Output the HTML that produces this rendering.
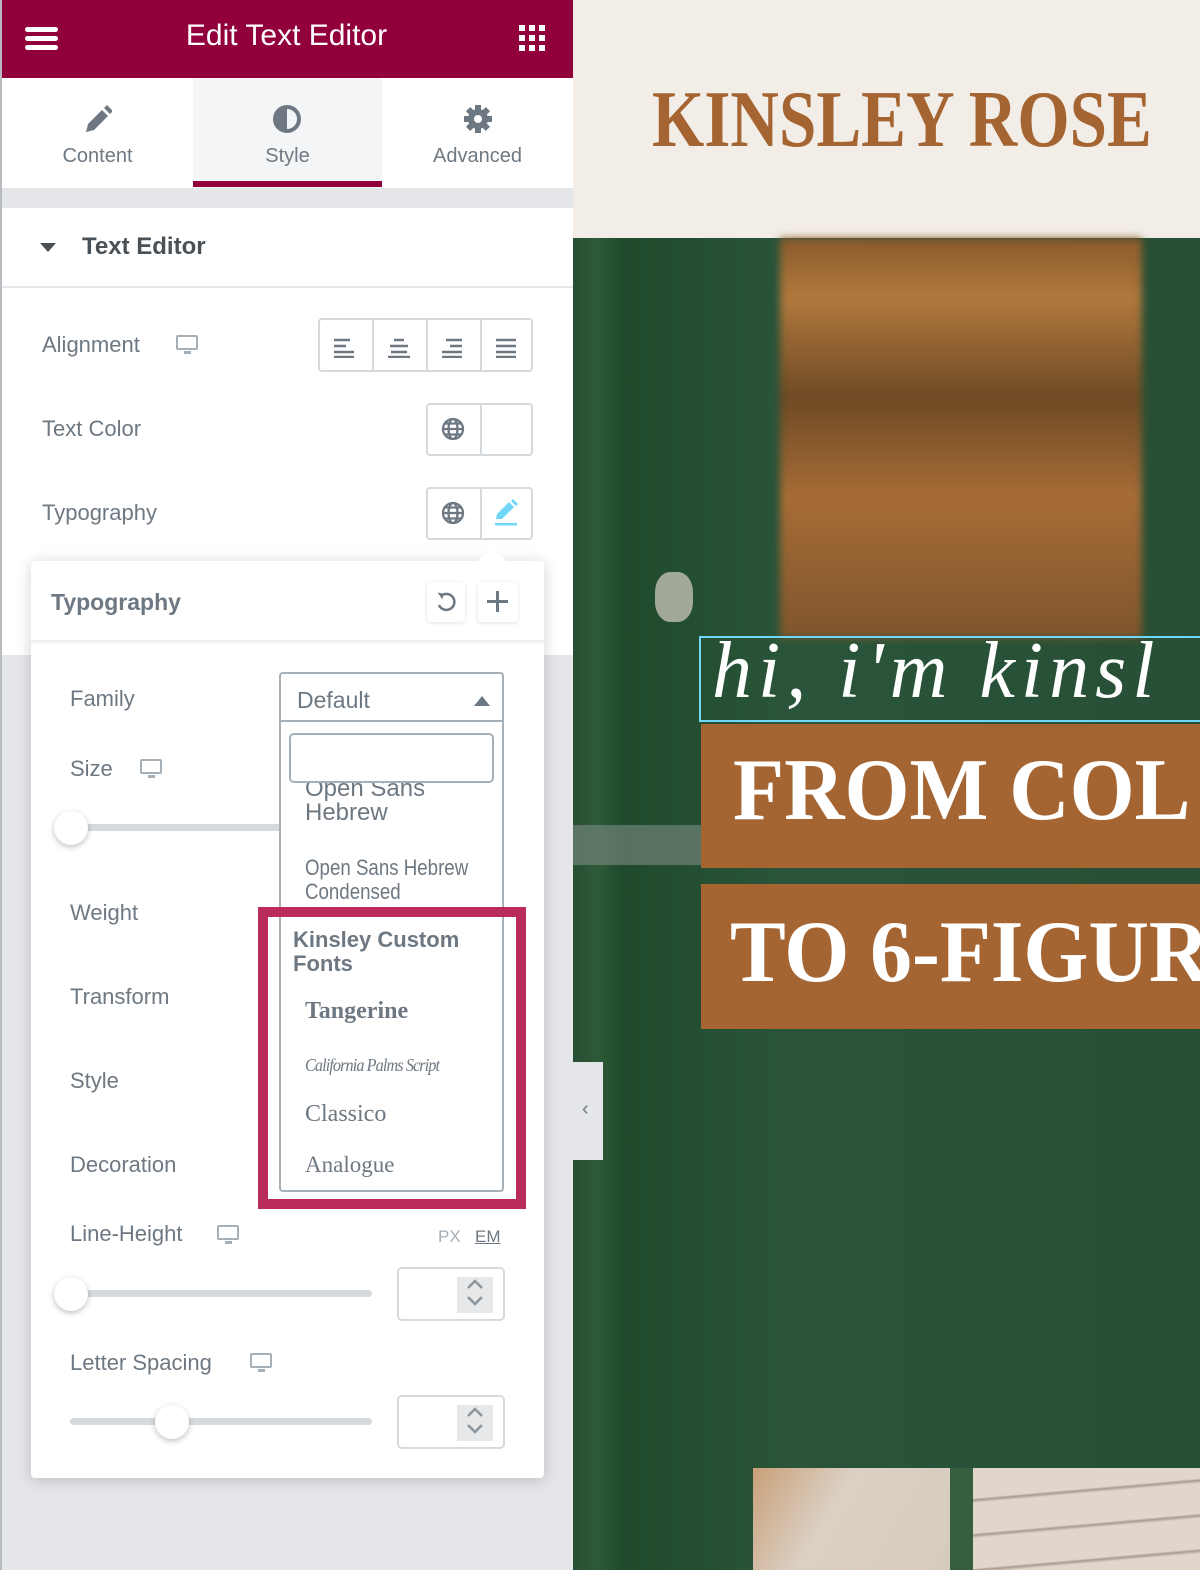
<!DOCTYPE html>
<html><head><meta charset="utf-8"><style>
*{box-sizing:border-box;margin:0;padding:0}
body{width:1200px;height:1570px;position:relative;overflow:hidden;font-family:"Liberation Sans",sans-serif;color:#6d7882;background:#fff}
.a{position:absolute}
.lbl{position:absolute;font-size:22px;color:#6d7882}
.mon{position:absolute;width:22px;height:15px;border:2.5px solid #a4afb7;border-radius:2px}
.mon:after{content:"";position:absolute;left:6px;top:14px;width:7px;height:3px;background:#a4afb7}
.btn{position:absolute;border:2px solid #d5dadf;border-radius:4px;background:#fff}
.glob{position:absolute;width:24px;height:24px}
.thumb{position:absolute;width:34px;height:34px;border-radius:50%;background:#fff;box-shadow:0 2px 6px rgba(0,0,0,.25)}
.track{position:absolute;height:7px;background:#d5dadf;border-radius:4px}
.num{position:absolute;width:108px;height:54px;border:2px solid #d5dadf;border-radius:5px;background:#fff}
.num i{position:absolute;right:10px;top:8px;width:36px;height:36px;background:#e6e8ea}
</style></head><body>
<div class="a" style="left:0;top:0;width:573px;height:1570px;background:#e4e6ea;border-left:2px solid #b8bcc0"></div>
<div class="a" style="left:2px;top:0;width:571px;height:78px;background:#92003b"></div>
<div class="a" style="left:25px;top:27px;width:33px;height:5px;background:#fff;border-radius:3px"></div>
<div class="a" style="left:25px;top:36px;width:33px;height:5px;background:#fff;border-radius:3px"></div>
<div class="a" style="left:25px;top:45px;width:33px;height:5px;background:#fff;border-radius:3px"></div>
<div class="a" style="left:0;top:19px;width:573px;text-align:center;color:#fff;font-size:30px">Edit Text Editor</div>
<svg class="a" style="left:519px;top:25px" width="28" height="28"><g fill="#fff"><rect x="0" y="0" width="6" height="6"/><rect x="10" y="0" width="6" height="6"/><rect x="20" y="0" width="6" height="6"/><rect x="0" y="10" width="6" height="6"/><rect x="10" y="10" width="6" height="6"/><rect x="20" y="10" width="6" height="6"/><rect x="0" y="20" width="6" height="6"/><rect x="10" y="20" width="6" height="6"/><rect x="20" y="20" width="6" height="6"/></g></svg>
<div class="a" style="left:2px;top:78px;width:571px;height:110px;background:#fff"></div>
<div class="a" style="left:193px;top:78px;width:189px;height:110px;background:#f4f5f6"></div>
<div class="a" style="left:193px;top:181px;width:189px;height:6px;background:#92003b"></div>
<svg class="a" style="left:82px;top:104px" width="30" height="30"><path d="M4 28 L6 20 L20 6 L26 12 L12 26 Z M22 4 L25 1 L31 7 L28 10 Z" fill="#6d7882"/></svg>
<div class="a" style="left:2px;top:145px;width:191px;text-align:center;font-size:20px">Content</div>
<svg class="a" style="left:272px;top:104px" width="30" height="30"><circle cx="15" cy="15" r="12" fill="none" stroke="#6d7882" stroke-width="4"/><path d="M15 3 A12 12 0 0 0 15 27Z" fill="#6d7882"/></svg>
<div class="a" style="left:193px;top:145px;width:189px;text-align:center;font-size:20px">Style</div>
<svg class="a" style="left:463px;top:104px" width="30" height="30"><g fill="#6d7882"><circle cx="15" cy="15" r="10"/><rect x="12" y="1" width="6" height="28"/><rect x="1" y="12" width="28" height="6"/><rect x="12" y="1" width="6" height="28" transform="rotate(45 15 15)"/><rect x="12" y="1" width="6" height="28" transform="rotate(-45 15 15)"/></g><circle cx="15" cy="15" r="4" fill="#fff"/></svg>
<div class="a" style="left:382px;top:145px;width:191px;text-align:center;font-size:20px">Advanced</div>
<div class="a" style="left:2px;top:208px;width:571px;height:447px;background:#fff"></div>
<div class="a" style="left:2px;top:286px;width:571px;height:2px;background:#e4e6ea"></div>
<div class="a" style="left:40px;top:243px;border-left:8px solid transparent;border-right:8px solid transparent;border-top:9px solid #495157"></div>
<div class="a" style="left:82px;top:233px;font-size:24px;font-weight:bold;color:#495157">Text Editor</div>
<div class="lbl" style="left:42px;top:332px">Alignment</div>
<div class="mon" style="left:176px;top:335px"></div>
<div class="btn" style="left:318px;top:318px;width:215px;height:54px"></div>
<div class="a" style="left:372px;top:320px;width:2px;height:50px;background:#d5dadf"></div>
<div class="a" style="left:426px;top:320px;width:2px;height:50px;background:#d5dadf"></div>
<div class="a" style="left:480px;top:320px;width:2px;height:50px;background:#d5dadf"></div>
<svg class="a" style="left:333px;top:336px" width="190" height="22"><g stroke="#6d7882" stroke-width="2.5"><path d="M1 4h16M1 10h12M1 16h20M1 21h20"/><path d="M61 4h10M57 10h18M58 16h16M55 21h22"/><path d="M113 4h16M117 10h12M109 16h20M109 21h20"/><path d="M163 4h20M163 10h20M163 16h20M163 21h20"/></g></svg>
<div class="lbl" style="left:42px;top:416px">Text Color</div>
<div class="btn" style="left:426px;top:403px;width:107px;height:53px"></div>
<div class="a" style="left:480px;top:405px;width:2px;height:49px;background:#d5dadf"></div>
<svg class="glob" style="left:441px;top:417px" viewBox="0 0 24 24"><g fill="none" stroke="#6d7882" stroke-width="2.3"><circle cx="12" cy="12" r="10"/><ellipse cx="12" cy="12" rx="4.5" ry="10"/><path d="M2 12h20M4 6.5h16M4 17.5h16"/></g></svg>
<div class="lbl" style="left:42px;top:500px">Typography</div>
<div class="btn" style="left:426px;top:487px;width:107px;height:53px"></div>
<div class="a" style="left:480px;top:489px;width:2px;height:49px;background:#d5dadf"></div>
<svg class="glob" style="left:441px;top:501px" viewBox="0 0 24 24"><g fill="none" stroke="#6d7882" stroke-width="2.3"><circle cx="12" cy="12" r="10"/><ellipse cx="12" cy="12" rx="4.5" ry="10"/><path d="M2 12h20M4 6.5h16M4 17.5h16"/></g></svg>
<svg class="a" style="left:493px;top:499px" width="26" height="28"><path d="M3 20 L4 15 L16 3 L21 8 L9 20 Z M18 2 L20 0 L25 5 L23 7Z" fill="#71d7f7"/><rect x="2" y="24" width="22" height="2.5" fill="#71d7f7"/></svg>
<div class="a" style="left:31px;top:561px;width:513px;height:917px;background:#fff;border-radius:4px;box-shadow:0 2px 15px rgba(0,0,0,.18)"></div>
<div class="a" style="left:478px;top:547px;width:0;height:0;border-left:14px solid transparent;border-right:14px solid transparent;border-bottom:14px solid #fff"></div>
<div class="a" style="left:31px;top:640px;width:513px;height:5px;background:linear-gradient(#eceef0,#fff)"></div>
<div class="a" style="left:51px;top:589px;font-size:23px;font-weight:bold;color:#6d7882">Typography</div>
<div class="a" style="left:427px;top:582px;width:38px;height:40px;background:#fff;border-radius:4px;box-shadow:0 1px 4px rgba(0,0,0,.12)"></div>
<svg class="a" style="left:434px;top:590px" width="24" height="24"><path d="M7 6 A8 8 0 1 1 5 15" fill="none" stroke="#6d7882" stroke-width="2.5"/><path d="M3 3 L9 3 L9 9Z" fill="#6d7882" transform="rotate(10 6 6)"/></svg>
<div class="a" style="left:478px;top:582px;width:40px;height:40px;background:#fff;border-radius:4px;box-shadow:0 1px 4px rgba(0,0,0,.12)"></div>
<div class="a" style="left:487px;top:600px;width:21px;height:3px;background:#6d7882"></div>
<div class="a" style="left:496px;top:591px;width:3px;height:21px;background:#6d7882"></div>
<div class="lbl" style="left:70px;top:686px">Family</div>
<div class="lbl" style="left:70px;top:756px">Size</div>
<div class="mon" style="left:140px;top:759px"></div>
<div class="track" style="left:70px;top:824px;width:215px"></div>
<div class="thumb" style="left:54px;top:811px"></div>
<div class="lbl" style="left:70px;top:900px">Weight</div>
<div class="lbl" style="left:70px;top:984px">Transform</div>
<div class="lbl" style="left:70px;top:1068px">Style</div>
<div class="lbl" style="left:70px;top:1152px">Decoration</div>
<div class="a" style="left:279px;top:672px;width:225px;height:520px;border:2px solid #a4afb7;border-radius:4px;background:#fff"></div>
<div class="a" style="left:280px;top:720px;width:223px;height:2px;background:#a4afb7"></div>
<div class="a" style="left:297px;top:687px;font-size:23px;color:#6d7882">Default</div>
<div class="a" style="left:474px;top:696px;border-left:8px solid transparent;border-right:8px solid transparent;border-bottom:10px solid #6d7882"></div>
<div class="a" style="left:289px;top:733px;width:205px;height:50px;border:2px solid #a4afb7;border-radius:5px"></div>
<div class="a" style="left:305px;top:783px;width:190px;height:52px;overflow:hidden"><div style="font-size:24px;line-height:24px;color:#6d7882;margin-top:-6px">Open Sans<br>Hebrew</div></div>
<div class="a" style="left:305px;top:856px;font-size:22px;line-height:24px;color:#6d7882;transform:scaleX(.85);transform-origin:left">Open Sans Hebrew<br>Condensed</div>
<div class="a" style="left:258px;top:907px;width:268px;height:302px;border:10px solid #b92b5b"></div>
<div class="a" style="left:293px;top:928px;font-size:22px;line-height:24px;font-weight:bold;color:#6d7882">Kinsley Custom<br>Fonts</div>
<div class="a" style="left:305px;top:998px;font-size:24px;font-weight:bold;color:#6d7882;font-family:'Liberation Serif',serif">Tangerine</div>
<div class="a" style="left:305px;top:1055px;font-size:18px;font-style:italic;color:#6d7882;font-family:'Liberation Serif',serif;letter-spacing:-1px;transform:scaleX(.9);transform-origin:left">California Palms Script</div>
<div class="a" style="left:305px;top:1101px;font-size:24px;color:#6d7882;font-family:'Liberation Serif',serif">Classico</div>
<div class="a" style="left:305px;top:1152px;font-size:23px;color:#6d7882;font-family:'Liberation Serif',serif">Analogue</div>
<div class="lbl" style="left:70px;top:1221px">Line-Height</div>
<div class="mon" style="left:217px;top:1225px"></div>
<div class="a" style="left:438px;top:1227px;font-size:17px;color:#a4afb7">PX</div>
<div class="a" style="left:475px;top:1227px;font-size:17px;color:#6d7882;text-decoration:underline">EM</div>
<div class="track" style="left:70px;top:1290px;width:302px"></div>
<div class="thumb" style="left:54px;top:1277px"></div>
<div class="num" style="left:397px;top:1267px"><i></i></div>
<div class="lbl" style="left:70px;top:1350px">Letter Spacing</div>
<div class="mon" style="left:250px;top:1353px"></div>
<div class="track" style="left:70px;top:1418px;width:302px"></div>
<div class="thumb" style="left:155px;top:1405px"></div>
<div class="num" style="left:397px;top:1395px"><i></i></div>
<svg class="a" style="left:466px;top:1278px" width="18" height="30"><path d="M2 10 L9 3 L16 10 M2 19 L9 26 L16 19" fill="none" stroke="#8b959e" stroke-width="2.5"/></svg>
<svg class="a" style="left:466px;top:1406px" width="18" height="30"><path d="M2 10 L9 3 L16 10 M2 19 L9 26 L16 19" fill="none" stroke="#8b959e" stroke-width="2.5"/></svg>
<div class="a" style="left:573px;top:0;width:627px;height:238px;background:#f2ede7"></div>
<div class="a" style="left:652px;top:78px;font-size:80px;line-height:84px;color:#a56532;font-family:'Liberation Serif',serif;white-space:nowrap;transform:scaleX(.84);transform-origin:left;font-weight:bold">KINSLEY ROSE</div>
<div class="a" style="left:573px;top:238px;width:627px;height:1332px;background:linear-gradient(90deg,#284f33 0%,#2d5a39 4%,#1f4a2c 8%,#2a553a 35%,#274f35 100%)"></div>
<div class="a" style="left:780px;top:238px;width:362px;height:400px;background:linear-gradient(180deg,#8a5a2c 0%,#b0783c 15%,#6f4a24 40%,#a66c36 65%,#7f552c 100%);filter:blur(4px)"></div>
<div class="a" style="left:573px;top:825px;width:130px;height:40px;background:#7d8c84;opacity:.6"></div>
<div class="a" style="left:655px;top:572px;width:38px;height:50px;background:#d8d0c6;opacity:.7;border-radius:40%"></div>
<div class="a" style="left:573px;top:1062px;width:30px;height:98px;background:#e4e6ea"></div>
<div class="a" style="left:582px;top:1098px;font-size:20px;color:#6d7882">‹</div>
<div class="a" style="left:699px;top:636px;width:501px;height:86px;border:2px solid #71d7f7;border-right:none"></div>
<div class="a" style="left:712px;top:626px;font-size:80px;font-style:italic;color:#fff;font-family:'Liberation Serif',serif;white-space:nowrap;letter-spacing:6px">hi, i'm kinsl</div>
<div class="a" style="left:701px;top:724px;width:499px;height:144px;background:#a56533"></div>
<div class="a" style="left:733px;top:746px;font-size:88px;line-height:90px;color:#fff;font-family:'Liberation Serif',serif;white-space:nowrap;font-weight:bold;transform:scaleX(.95);transform-origin:left">FROM COL</div>
<div class="a" style="left:701px;top:884px;width:499px;height:145px;background:#a56533"></div>
<div class="a" style="left:730px;top:908px;font-size:88px;line-height:90px;color:#fff;font-family:'Liberation Serif',serif;white-space:nowrap;font-weight:bold;transform:scaleX(.95);transform-origin:left">TO 6-FIGUR</div>
<div class="a" style="left:753px;top:1468px;width:197px;height:102px;background:linear-gradient(120deg,#c9a079,#dbd0c4 40%,#d6cbbd)"></div>
<div class="a" style="left:950px;top:1468px;width:23px;height:102px;background:#365f40"></div>
<div class="a" style="left:973px;top:1468px;width:227px;height:102px;background:repeating-linear-gradient(175deg,#e0d6cc 0,#e0d6cc 30px,#a89a8e 32px,#e0d6cc 35px)"></div>
</body></html>
